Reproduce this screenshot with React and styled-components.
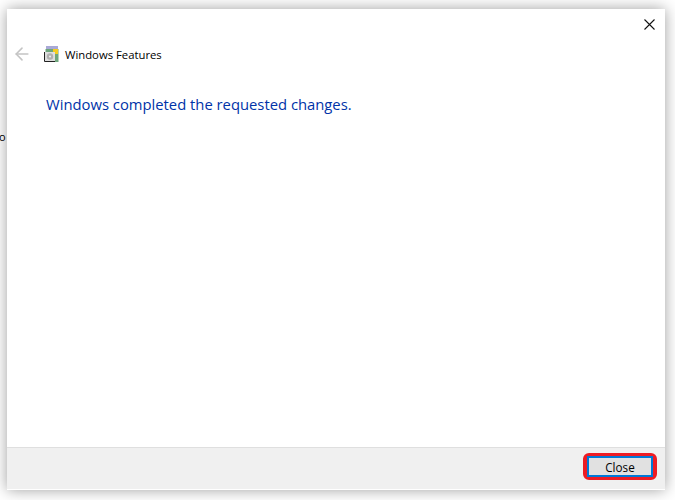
import React from "react";
import styled, { createGlobalStyle } from "styled-components";
import { ArrowLeft } from "lucide-react";

const GlobalStyle = createGlobalStyle`
  html, body {
    margin: 0;
    padding: 0;
    background: #fff;
  }
  body {
    width: 675px;
    height: 500px;
    overflow: hidden;
    font-family: "Open Sans", "Noto Sans", sans-serif;
  }
`;

const App = () => {
  return (
    <Desktop>
      <GlobalStyle />
      <BehindText>o</BehindText>
      <Dialog>
        <TitleBar>
          <CloseIcon viewBox="0 0 11 11">
            <path d="M0.5 0.5 L10.5 10.5 M10.5 0.5 L0.5 10.5" />
          </CloseIcon>
        </TitleBar>
        <NavRow>
          <BackButton>
            <ArrowLeft size={20} strokeWidth={1.9} />
          </BackButton>
          <FeatureIcon viewBox="0 0 16 16">
            <rect x="2" y="0" width="12" height="3" fill="#a9a9d6" />
            <rect x="1.5" y="3" width="13" height="13" fill="#6fa67c" />
            <rect x="9" y="3" width="5" height="5" fill="#f5cd20" />
            <rect x="1" y="6" width="10" height="10" fill="#dedede" />
            <path d="M0.5 6 V15.5 H11" fill="none" stroke="#222" />
            <circle cx="6" cy="10.5" r="3.2" fill="#b0b0b0" />
            <circle cx="6" cy="10.5" r="1" fill="#f2f2f2" />
          </FeatureIcon>
          <DialogTitle>Windows Features</DialogTitle>
        </NavRow>
        <Content>
          <Heading>Windows completed the requested changes.</Heading>
        </Content>
        <Footer>
          <CloseHighlight>
            <CloseButton>Close</CloseButton>
          </CloseHighlight>
        </Footer>
      </Dialog>
    </Desktop>
  );
};

const Desktop = styled.div`
  position: relative;
  width: 675px;
  height: 500px;
  padding: 9px 10px 10px 7px;
  box-sizing: border-box;
`;

const BehindText = styled.span`
  position: absolute;
  left: -1px;
  top: 129px;
  font-size: 11px;
  line-height: 16px;
  color: #000;
`;

const Dialog = styled.div`
  position: relative;
  height: 100%;
  display: flex;
  flex-direction: column;
  background: #fff;
  box-shadow: 0 0 14px rgba(0, 0, 0, 0.38);
`;

const TitleBar = styled.div`
  display: flex;
  justify-content: flex-end;
  padding: 10px 10px 0 0;
  height: 20px;
`;

const CloseIcon = styled.svg`
  width: 11px;
  height: 11px;
  fill: none;
  stroke: #111;
  stroke-width: 1.1;
`;

const NavRow = styled.div`
  display: flex;
  align-items: center;
  height: 30px;
`;

const BackButton = styled.div`
  display: flex;
  margin-left: 5px;
  width: 20px;
  color: #c4c4c4;
`;

const FeatureIcon = styled.svg`
  width: 16px;
  height: 16px;
  margin-left: 12px;
`;

const DialogTitle = styled.div`
  margin-left: 5px;
  font-size: 11.3px;
  color: #000;
`;

const Content = styled.div`
  flex: 1;
  padding: 25px 0 0 39px;
`;

const Heading = styled.div`
  font-size: 14.8px;
  line-height: 20px;
  color: #0033a8;
`;

const Footer = styled.div`
  display: flex;
  justify-content: flex-end;
  align-items: flex-start;
  box-sizing: border-box;
  height: 43px;
  padding: 5px 8px 0 0;
  background: #f0f0f0;
  border-top: 1px solid #dfdfdf;
  border-bottom: 1px solid #fff;
`;

const CloseHighlight = styled.div`
  border-style: solid;
  border-color: #ed1c24;
  border-width: 3px 4px;
  border-radius: 6px;
`;

const CloseButton = styled.button`
  display: block;
  width: 66px;
  height: 21px;
  padding: 1px 0 0;
  background: #e1e1e1;
  border: 2px solid #0078d7;
  font-family: inherit;
  font-size: 11.7px;
  color: #000;
`;

export default App;
